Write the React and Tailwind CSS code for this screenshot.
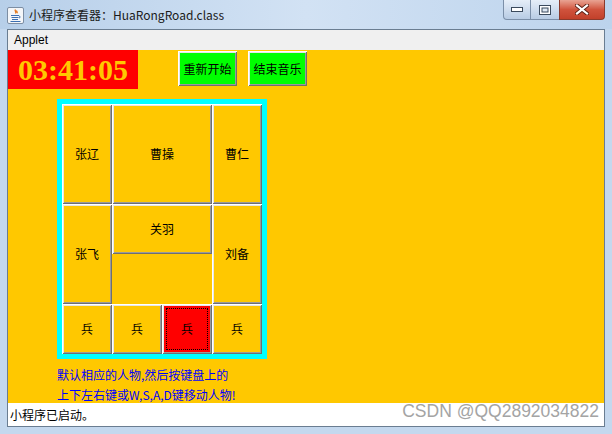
import React from 'react';

const cjk = { fontFamily: '"Noto Sans CJK SC", "Liberation Sans", sans-serif' };

// raised AWT button look
const raised =
  'shadow-[inset_1px_1px_0_#ffffff,inset_-1px_-1px_0_#6f6f6f,inset_2px_2px_0_#e6e6e6,inset_-2px_-2px_0_#9a9a9a]';

function Block({ label, className = '', red = false }) {
  return (
    <div
      className={`relative flex items-center justify-center text-[12px] text-black ${raised} ${
        red ? 'bg-[#ff0000]' : 'bg-[#ffc800]'
      } ${className}`}
      style={cjk}
    >
      {red && <div className="absolute inset-[4px] border border-dotted border-black" />}
      <span className="relative">{label}</span>
    </div>
  );
}

function JavaIcon() {
  return (
    <svg width="17" height="17" viewBox="0 0 17 17">
      <rect x="0.5" y="0.5" width="16" height="16" rx="1.5" fill="#f4f6f9" stroke="#7d8ea3" />
      <path d="M8.5 2.5c-1.5 1.5 1.5 2.2 0 4 M10 3.5c-1 1 1 1.5 0 2.6" stroke="#e2761b" strokeWidth="1.3" fill="none" />
      <path d="M4 8.5h8 M4.5 10.5h7 M5 12.5h6 M3.5 14.5h10" stroke="#3b6fb2" strokeWidth="1.1" />
      <path d="M12 9c1.5 0 1.5 2 0 2" stroke="#3b6fb2" fill="none" />
    </svg>
  );
}

function TitleButtons() {
  return (
    <div className="flex h-[20px] self-start mr-[7px]">
      <div className="w-[28px] h-full flex items-center justify-center border border-[#7b8fa8] border-t-0 rounded-bl-[4px] bg-gradient-to-b from-[#e6eef8] to-[#b8cce4]">
        <svg width="12" height="6" viewBox="0 0 12 6">
          <rect x="0.5" y="0.5" width="11" height="4" fill="#fff" stroke="#3b4a5c" />
        </svg>
      </div>
      <div className="w-[28px] h-full flex items-center justify-center border-b border-[#7b8fa8] bg-gradient-to-b from-[#e6eef8] to-[#b8cce4]">
        <svg width="12" height="10" viewBox="0 0 12 10">
          <rect x="0.5" y="0.5" width="11" height="9" fill="#fff" stroke="#3b4a5c" />
          <rect x="3" y="3" width="6" height="4" fill="#dfe8f3" stroke="#3b4a5c" />
        </svg>
      </div>
      <div className="w-[46px] h-full flex items-center justify-center border border-[#8a3a2c] border-t-0 rounded-br-[4px] bg-gradient-to-b from-[#e8a393] via-[#d0533d] to-[#c2402a]">
        <svg width="14" height="11" viewBox="0 0 14 11">
          <path d="M2 1.5 L12 9.5 M12 1.5 L2 9.5" stroke="#5a1f14" strokeWidth="4" strokeLinecap="square" />
          <path d="M2 1.5 L12 9.5 M12 1.5 L2 9.5" stroke="#ffffff" strokeWidth="2.2" strokeLinecap="square" />
        </svg>
      </div>
    </div>
  );
}

export default function App() {
  return (
    <div className="w-[612px] h-[434px] flex flex-col bg-[#c4d8ee] overflow-hidden">
      {/* Title bar */}
      <div className="h-[29px] flex items-start bg-gradient-to-r from-[#b7cfe9] via-[#d2e2f4] to-[#bcd3ec]">
        <div className="flex items-center pl-[7px] pt-[6px] gap-[5px] flex-1">
          <JavaIcon />
          <span className="text-[12px] text-[#1a1a1a]" style={cjk}>
            小程序查看器：HuaRongRoad.class
          </span>
        </div>
        <TitleButtons />
      </div>

      {/* Client */}
      <div className="flex-1 flex px-[7px] pb-[7px]">
        <div className="flex-1 flex flex-col border border-[#6a7d91] bg-white relative">
          {/* menu bar */}
          <div className="h-[20px] bg-[#f0f0f0] flex items-center pl-[6px]">
            <span className="text-[12px] text-black" style={{ fontFamily: '"Liberation Sans", sans-serif' }}>
              Applet
            </span>
          </div>

          {/* applet area */}
          <div className="h-[353px] bg-[#ffc800] flex flex-col">
            <div className="flex items-start">
              <div
                className="w-[130px] h-[39px] bg-[#ff0000] flex items-center justify-center text-[30px] font-bold text-[#ffc800] leading-none"
                style={{ fontFamily: '"Liberation Serif", serif' }}
              >
                03:41:05
              </div>
              <button
                className={`ml-[40px] mt-[1px] w-[59px] h-[35px] bg-[#00ff00] text-[12px] text-black ${raised}`}
                style={cjk}
              >
                重新开始
              </button>
              <button
                className={`ml-[11px] mt-[1px] w-[59px] h-[35px] bg-[#00ff00] text-[12px] text-black ${raised}`}
                style={cjk}
              >
                结束音乐
              </button>
            </div>

            <div className="ml-[49px] mt-[10px] w-[210px] h-[260px] bg-[#00ffff] p-[5px]">
              <div className="w-[200px] h-[250px] bg-[#ffc800] grid grid-cols-[repeat(4,50px)] grid-rows-[repeat(5,50px)]">
                <Block label="张辽" className="col-start-1 row-start-1 row-span-2" />
                <Block label="曹操" className="col-start-2 col-span-2 row-start-1 row-span-2" />
                <Block label="曹仁" className="col-start-4 row-start-1 row-span-2" />
                <Block label="张飞" className="col-start-1 row-start-3 row-span-2" />
                <Block label="关羽" className="col-start-2 col-span-2 row-start-3" />
                <Block label="刘备" className="col-start-4 row-start-3 row-span-2" />
                <Block label="兵" className="col-start-1 row-start-5" />
                <Block label="兵" className="col-start-2 row-start-5" />
                <Block label="兵" className="col-start-3 row-start-5" red />
                <Block label="兵" className="col-start-4 row-start-5" />
              </div>
            </div>

            <div className="ml-[49px] mt-[6px] text-[12px] leading-[20px] text-[#0000ff]" style={cjk}>
              <div>默认相应的人物,然后按键盘上的</div>
              <div>上下左右键或W,S,A,D键移动人物!</div>
            </div>
          </div>

          {/* status bar */}
          <div className="flex-1 flex items-center pl-[2px] bg-white">
            <span className="text-[12px] text-black" style={cjk}>
              小程序已启动。
            </span>
          </div>

          <div
            className="absolute right-[5px] bottom-[2px] text-[17.5px] text-[#a4a4a4] [text-shadow:0_0_2px_#ffffff]"
            style={{ fontFamily: '"Liberation Sans", sans-serif' }}
          >
            CSDN @QQ2892034822
          </div>
        </div>
      </div>
    </div>
  );
}
